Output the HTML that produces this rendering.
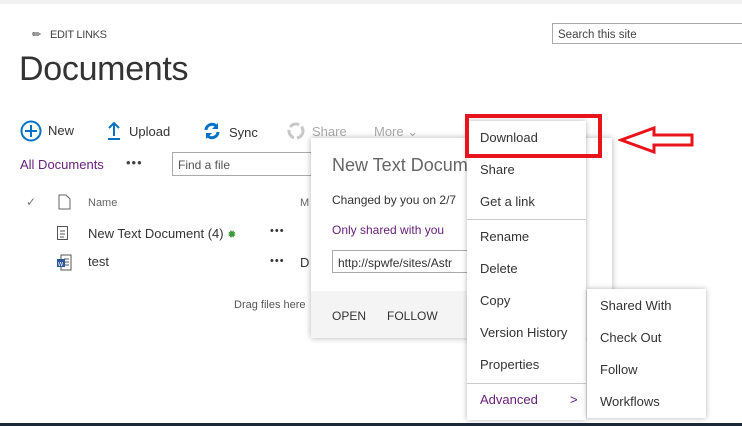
<!DOCTYPE html>
<html><head><style>
body{margin:0;width:742px;height:426px;position:relative;overflow:hidden;background:#fff;font-family:"Liberation Sans",sans-serif;color:#333}
.a{position:absolute;white-space:nowrap}
.mi{position:absolute;left:13px;font-size:13px;color:#333}
</style></head><body>
<div class="a" style="left:0;top:0;width:742px;height:4px;background:#f1f1f1"></div>
<div class="a" style="left:32px;top:28px;font-size:11px;color:#444">&#9999;&#xFE0E;</div>
<div class="a" style="left:50px;top:29px;font-size:11px;color:#444;letter-spacing:-0.3px">EDIT LINKS</div>
<div class="a" style="left:552px;top:23px;width:195px;height:21px;border:1px solid #aaa;box-sizing:border-box"></div>
<div class="a" style="left:558px;top:29px;font-size:11.5px;color:#444">Search this site</div>
<div class="a" style="left:19px;top:50px;font-size:34px;font-weight:300;color:#333;letter-spacing:-0.3px">Documents</div>
<svg class="a" style="left:20px;top:120px" width="22" height="22"><circle cx="11" cy="11" r="9.5" fill="none" stroke="#0072c6" stroke-width="2"/><path d="M11 5v12M5 11h12" stroke="#0072c6" stroke-width="2"/></svg>
<div class="a" style="left:48px;top:123px;font-size:13px">New</div>
<svg class="a" style="left:106px;top:121px" width="16" height="20"><path d="M8 2v13M3 7l5-5 5 5M2 18h12" stroke="#0072c6" stroke-width="2" fill="none"/></svg>
<div class="a" style="left:129px;top:124px;font-size:13px">Upload</div>
<svg class="a" style="left:203px;top:122px" width="18" height="18"><path d="M3 8a6 6 0 0 1 11-3M15 10a6 6 0 0 1-11 3" stroke="#0072c6" stroke-width="3" fill="none"/><path d="M15 1v6h-6z M3 17v-6h6z" fill="#0072c6"/></svg>
<div class="a" style="left:229px;top:125px;font-size:13px">Sync</div>
<svg class="a" style="left:286px;top:121px" width="20" height="20"><circle cx="10" cy="10" r="7" fill="none" stroke="#c8c8c8" stroke-width="3" stroke-dasharray="10 3"/></svg>
<div class="a" style="left:312px;top:124px;font-size:13px;color:#aaa">Share</div>
<div class="a" style="left:374px;top:124px;font-size:13px;color:#aaa">More &#8964;</div>
<div class="a" style="left:20px;top:157px;font-size:13px;color:#68217a">All Documents</div>
<div class="a" style="left:126px;top:155px;font-size:13px;color:#444;letter-spacing:1px">•••</div>
<div class="a" style="left:172px;top:152px;width:150px;height:24px;border:1px solid #aaa;box-sizing:border-box"></div>
<div class="a" style="left:178px;top:158px;font-size:12px;color:#555">Find a file</div>
<div class="a" style="left:26px;top:195px;font-size:12px;color:#777">&#10003;</div>
<svg class="a" style="left:58px;top:194px" width="13" height="16"><path d="M1 1h7l4 4v10H1z" fill="none" stroke="#666"/></svg>
<div class="a" style="left:88px;top:197px;font-size:11px;color:#666">Name</div>
<div class="a" style="left:300px;top:197px;font-size:11px;color:#666">M</div>
<svg class="a" style="left:56px;top:225px" width="13" height="16"><rect x="1.5" y="1.5" width="10" height="13" fill="none" stroke="#555"/><path d="M4 6h5M4 9h5M4 12h4" stroke="#555"/></svg>
<div class="a" style="left:88px;top:226px;font-size:13px">New Text Document (4) <span style="color:#3a9a3a;font-size:11px">&#10041;</span></div>
<div class="a" style="left:270px;top:225px;font-size:11px;letter-spacing:1px">•••</div>
<svg class="a" style="left:56px;top:254px" width="16" height="17"><rect x="5" y="1" width="10" height="15" fill="#fff" stroke="#555"/><path d="M8 5h5M8 8h5M8 11h5" stroke="#555"/><rect x="1" y="5" width="8" height="8" fill="#2b579a"/><text x="2" y="12" font-size="7" fill="#fff" font-family="Liberation Sans">w</text></svg>
<div class="a" style="left:88px;top:254px;font-size:13px">test</div>
<div class="a" style="left:270px;top:255px;font-size:11px;letter-spacing:1px">•••</div>
<div class="a" style="left:300px;top:255px;font-size:13px">D</div>
<div class="a" style="left:234px;top:299px;font-size:11px;color:#555">Drag files here</div>
<div class="a" style="left:311px;top:138px;width:301px;height:200px;background:#fff;box-shadow:0 0 6px rgba(0,0,0,.3)"></div>
<div class="a" style="left:311px;top:291px;width:301px;height:47px;background:#f4f4f4"></div>
<div class="a" style="left:332px;top:155px;font-size:18px;font-weight:300;color:#666">New Text Docume</div>
<div class="a" style="left:332px;top:193px;font-size:12px">Changed by you on 2/7</div>
<div class="a" style="left:332px;top:223px;font-size:12px;color:#68217a">Only shared with you</div>
<div class="a" style="left:332px;top:250px;width:140px;height:23px;border:1px solid #aaa;box-sizing:border-box"></div>
<div class="a" style="left:338px;top:256px;font-size:12px">http://spwfe/sites/Astr</div>
<div class="a" style="left:332px;top:309px;font-size:12px">OPEN</div>
<div class="a" style="left:387px;top:309px;font-size:12px">FOLLOW</div>
<div class="a" style="left:467px;top:121px;width:119px;height:299px;background:#fff;box-shadow:0 0 5px rgba(0,0,0,.3)">
<div class="mi" style="top:9px">Download</div>
<div class="mi" style="top:41px">Share</div>
<div class="mi" style="top:73px">Get a link</div>
<div class="a" style="left:0;top:98px;width:119px;height:1px;background:#ccc"></div>
<div class="mi" style="top:108px">Rename</div>
<div class="mi" style="top:140px">Delete</div>
<div class="mi" style="top:172px">Copy</div>
<div class="mi" style="top:204px">Version History</div>
<div class="mi" style="top:236px">Properties</div>
<div class="a" style="left:0;top:262px;width:119px;height:1px;background:#ccc"></div>
<div class="mi" style="top:271px;color:#68217a">Advanced</div>
<div class="mi" style="top:271px;left:103px;color:#68217a">&gt;</div>
</div>
<div class="a" style="left:587px;top:289px;width:119px;height:129px;background:#fff;box-shadow:0 0 5px rgba(0,0,0,.3)">
<div class="mi" style="top:9px">Shared With</div>
<div class="mi" style="top:41px">Check Out</div>
<div class="mi" style="top:73px">Follow</div>
<div class="mi" style="top:105px">Workflows</div>
</div>
<div class="a" style="left:465px;top:114px;width:137px;height:44px;border:4px solid #e8141c;box-sizing:border-box"></div>
<svg class="a" style="left:618px;top:124px" width="78" height="32"><path d="M3 16 L36 4 V11 H74 V21 H36 V28 Z" fill="none" stroke="#e8141c" stroke-width="3"/></svg>
<div class="a" style="left:0;top:423px;width:742px;height:3px;background:#1a2838"></div>
</body></html>
